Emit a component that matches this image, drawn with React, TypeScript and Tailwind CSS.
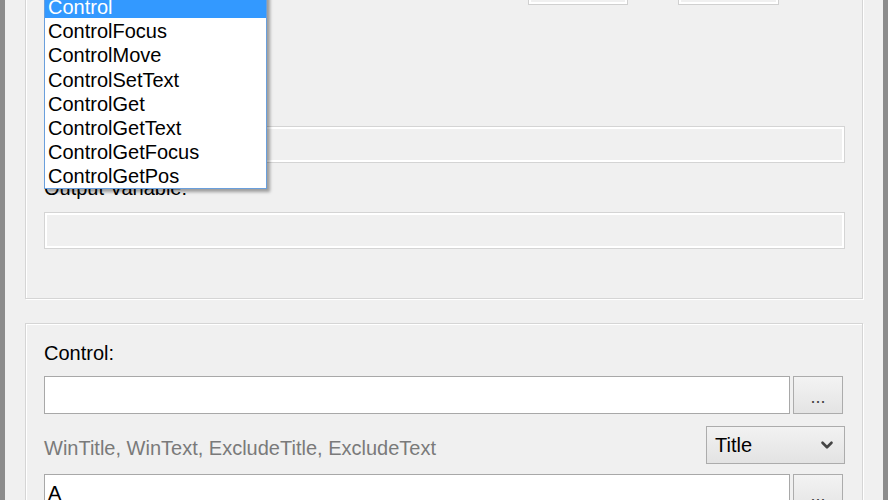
import { ChevronDown } from 'lucide-react';

const commands = [
  'Control',
  'ControlFocus',
  'ControlMove',
  'ControlSetText',
  'ControlGet',
  'ControlGetText',
  'ControlGetFocus',
  'ControlGetPos',
];

function DisabledBox({ className = '' }: { className?: string }) {
  return (
    <div
      className={`h-[37px] border border-[#d4d4d4] bg-[#f0f0f0] shadow-[inset_0_0_0_2px_#ffffff] ${className}`}
    />
  );
}

function BrowseButton() {
  return (
    <button className="w-[50px] h-[38px] shrink-0 border border-[#acacac] bg-gradient-to-b from-[#f3f3f3] to-[#e4e4e4] text-[#444] text-[18px] leading-[30px] pt-[4px] mr-[2px]">
      ...
    </button>
  );
}

export default function App() {
  return (
    <div className="w-[888px] h-[500px] overflow-hidden bg-[#f0f0f0] flex font-['Liberation_Sans',Arial,sans-serif] text-[20px] text-black">
      <div className="w-[5px] shrink-0 bg-[#8c8c8c]" />

      <div className="flex-1 px-[20px] flex flex-col gap-[24px]">
        {/* Command group */}
        <div className="relative -mt-[40px] border border-[#d5d5d5] shadow-[inset_1px_1px_0_#ffffff,1px_1px_0_#ffffff] pt-[7px] pl-[18px] pr-[17px] pb-[49px] flex flex-col shrink-0">
          <div className="flex items-start">
            <div className="w-[223px] h-[25px] border border-[#acacac] bg-white" />
            <div className="ml-auto flex gap-[50px] pr-[66px]">
              <div className="w-[100px] h-[37px] border border-[#d0d0d0] bg-[#f0f0f0] shadow-[inset_0_0_0_2px_#ffffff]" />
              <div className="w-[101px] h-[37px] border border-[#d0d0d0] bg-[#f0f0f0] shadow-[inset_0_0_0_2px_#ffffff]" />
            </div>
          </div>
          <DisabledBox className="mt-[121px]" />
          <div className="mt-[13px] leading-[24px]">Output Variable:</div>
          <DisabledBox className="mt-[12px]" />

          {/* open dropdown list */}
          <ul className="absolute left-[18px] top-[32px] w-[223px] border border-[#6a9fdc] bg-white shadow-[3px_3px_3px_rgba(0,0,0,0.35)] z-10">
            {commands.map((c, i) => (
              <li
                key={c}
                className={`h-[24.2px] pt-[3px] leading-[21.2px] pl-[3px] whitespace-nowrap ${
                  i === 0 ? 'bg-[#3399ff] text-white' : 'text-black'
                }`}
              >
                {c}
              </li>
            ))}
          </ul>
        </div>

        {/* Control group */}
        <div className="border border-[#d5d5d5] shadow-[inset_1px_1px_0_#ffffff,1px_1px_0_#ffffff] pt-[17px] pl-[18px] pr-[17px] pb-[20px] flex flex-col shrink-0">
          <div className="leading-[24px]">Control:</div>
          <div className="mt-[11px] flex gap-[3px]">
            <div className="flex-1 h-[38px] border border-[#a8a8a8] bg-white" />
            <BrowseButton />
          </div>
          <div className="mt-[12px] flex items-start">
            <div className="mt-[10px] leading-[24px] text-[#7a7a7a]">
              WinTitle, WinText, ExcludeTitle, ExcludeText
            </div>
            <div className="ml-auto w-[139px] h-[38px] border border-[#acacac] bg-gradient-to-b from-[#f2f2f2] to-[#e3e3e3] flex items-center pl-[8px] pr-[8px]">
              <span className="flex-1">Title</span>
              <ChevronDown size={18} strokeWidth={3.5} className="text-[#454545]" />
            </div>
          </div>
          <div className="mt-[10px] flex gap-[3px]">
            <div className="flex-1 h-[38px] border border-[#a8a8a8] bg-white flex items-center pl-[3px]">
              A
            </div>
            <BrowseButton />
          </div>
        </div>
      </div>

      <div className="w-[5px] shrink-0 bg-[#8c8c8c]" />
    </div>
  );
}
